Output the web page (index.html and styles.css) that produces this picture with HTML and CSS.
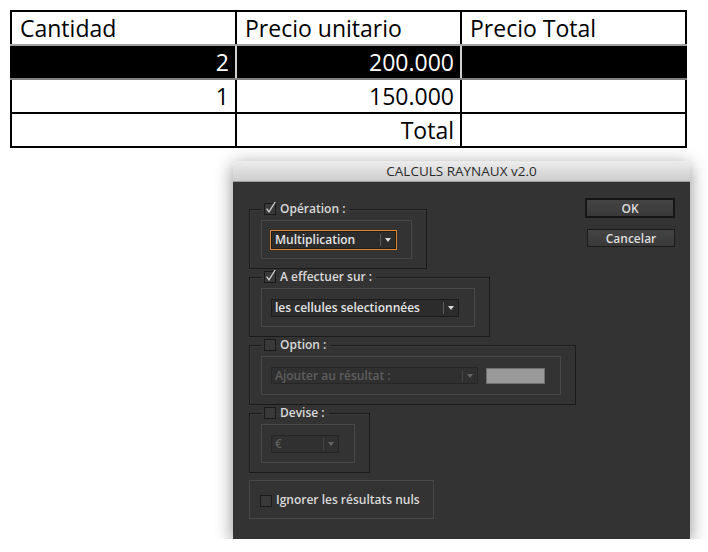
FILE: index.html
```html
<!DOCTYPE html>
<html lang="es">
<head>
    <meta charset="UTF-8">
    <title>Calculs Raynaux</title>
    <link rel="stylesheet" href="styles.css">
</head>
<body>

<table class="grid">
    <thead>
        <tr><th>Cantidad</th><th>Precio unitario</th><th>Precio Total</th></tr>
    </thead>
    <tbody>
        <tr class="sel"><td class="num">2</td><td class="num">200.000</td><td></td></tr>
        <tr><td class="num">1</td><td class="num">150.000</td><td></td></tr>
        <tr><td></td><td class="num">Total</td><td></td></tr>
    </tbody>
</table>

<div class="dialog">
    <div class="titlebar">CALCULS RAYNAUX v2.0</div>
    <div class="dialog-body">
        <div class="panels">
            <fieldset class="panel">
                <legend><svg class="cb" width="13" height="14" viewBox="0 0 13 14"><rect x="0.5" y="2.5" width="11" height="11" fill="#393939" stroke="#1a1a1a"/><path d="M2.6 7.6 L5 10.8 L11.2 1" fill="none" stroke="#cfcfcf" stroke-width="1.4"/></svg>Opération :</legend>
                <div class="group">
                    <div class="dropdown focus dd-op">
                        <span class="value">Multiplication</span>
                        <span class="arrow"></span>
                    </div>
                </div>
            </fieldset>
            <fieldset class="panel">
                <legend><svg class="cb" width="13" height="14" viewBox="0 0 13 14"><rect x="0.5" y="2.5" width="11" height="11" fill="#393939" stroke="#1a1a1a"/><path d="M2.6 7.6 L5 10.8 L11.2 1" fill="none" stroke="#cfcfcf" stroke-width="1.4"/></svg>A effectuer sur :</legend>
                <div class="group">
                    <div class="dropdown dd-cells">
                        <span class="value">les cellules selectionnées</span>
                        <span class="arrow"></span>
                    </div>
                </div>
            </fieldset>
            <fieldset class="panel">
                <legend><svg class="cb" width="13" height="14" viewBox="0 0 13 14"><rect x="0.5" y="2.5" width="11" height="11" fill="#393939" stroke="#1a1a1a"/></svg>Option :</legend>
                <div class="group">
                    <div class="dropdown disabled dd-add">
                        <span class="value">Ajouter au résultat :</span>
                        <span class="arrow"></span>
                    </div>
                    <div class="swatch"></div>
                </div>
            </fieldset>
            <fieldset class="panel">
                <legend><svg class="cb" width="13" height="14" viewBox="0 0 13 14"><rect x="0.5" y="2.5" width="11" height="11" fill="#393939" stroke="#1a1a1a"/></svg>Devise :</legend>
                <div class="group">
                    <div class="dropdown disabled dd-cur">
                        <span class="value">€</span>
                        <span class="arrow"></span>
                    </div>
                </div>
            </fieldset>
            <div class="plain">
                <svg class="cb" width="13" height="14" viewBox="0 0 13 14"><rect x="0.5" y="2.5" width="11" height="11" fill="#393939" stroke="#1a1a1a"/></svg>Ignorer les résultats nuls
            </div>
        </div>
        <div class="buttons">
            <button class="btn default">OK</button>
            <button class="btn">Cancelar</button>
        </div>
    </div>
</div>

</body>
</html>
```

FILE: styles.css
```css
body {
    margin: 0;
    background: #fff;
    font-family: "Open Sans", "Liberation Sans", sans-serif;
}

/* spreadsheet-like table */
.grid {
    border-collapse: collapse;
    table-layout: fixed;
    width: 677px;
    margin: 10px 0 0 10px;
    font-size: 23px;
    color: #000;
}
.grid tr {
    height: 34px;
}
.grid th,
.grid td {
    border: 2px solid #000;
    padding: 0 6px 0 8px;
    line-height: 28px;
    font-weight: normal;
    text-align: left;
    white-space: nowrap;
}
.grid .num {
    text-align: right;
}
.grid thead th {
    border-bottom-color: #a0a0a0;
}
.sel td {
    background: #000;
    color: #fff;
    border-right-color: #d0d0d0;
    border-bottom-color: #808080;
}
.sel td:last-child {
    border-right-color: #000;
}

/* dialog */
.dialog {
    width: 457px;
    margin: 13px 0 0 233px;
    border-radius: 5px 5px 0 0;
    box-shadow: 0 4px 18px rgba(0, 0, 0, 0.45);
}
.titlebar {
    height: 21px;
    box-sizing: border-box;
    line-height: 20px;
    text-align: center;
    font-size: 13.5px;
    color: #2b2b2b;
    background: linear-gradient(#ededed, #cdcdcd);
    border-radius: 5px 5px 0 0;
    border-bottom: 1px solid #9c9c9c;
}
.dialog-body {
    height: 357px;
    box-sizing: border-box;
    display: flex;
    justify-content: space-between;
    padding: 16px 15px 20px 16px;
    background: #333;
    color: #d9d9d9;
    font-size: 12px;
    font-weight: 600;
}
.panels {
    display: flex;
    flex-direction: column;
    align-items: flex-start;
    padding-top: 3px;
}
.panel {
    margin: 0;
    padding: 0;
    min-width: 0;
    border: 1px solid #1b1b1b;
    box-shadow: inset 1px 1px 0 #3b3b3b;
}
.panel legend {
    margin-left: 12px;
    padding: 0 4px 0 2px;
    height: 16px;
    line-height: 16px;
    white-space: nowrap;
}
.cb {
    vertical-align: -2px;
    margin-right: 3px;
}
.group {
    display: flex;
    align-items: center;
    gap: 8px;
    height: 39px;
    box-sizing: border-box;
    margin: 3px 14px 9px 11px;
    padding: 0 15px 0 9px;
    border: 1px solid #474747;
}

.dropdown {
    display: flex;
    align-items: center;
    height: 18px;
    box-sizing: border-box;
    border: 1px solid #1c1c1c;
    background: #2c2c2c;
    color: #e4e4e4;
}
.dropdown .value {
    flex: 1;
    padding-left: 3px;
    line-height: 16px;
    white-space: nowrap;
    overflow: hidden;
}
.dropdown .arrow {
    width: 14px;
    height: 12px;
    border-left: 1px solid #5a5a5a;
    display: flex;
    align-items: center;
    justify-content: center;
}
.dropdown .arrow::after {
    content: "";
    border-left: 3.5px solid transparent;
    border-right: 3.5px solid transparent;
    border-top: 4px solid #dadada;
}
.dropdown.focus {
    outline: 1px solid #e5832b;
}
.dropdown.disabled {
    background: #303030;
    border-color: #262626;
    color: #5e5e5e;
}
.dropdown.disabled .arrow {
    border-left-color: #444;
}
.dropdown.disabled .arrow::after {
    border-top-color: #666;
}
.dd-op { width: 125px; }
.dd-cells { width: 188px; }
.dd-add { width: 207px; height: 17px; }
.dd-cur { width: 68px; }

.swatch {
    width: 59px;
    height: 16px;
    box-sizing: border-box;
    background: #999;
    border: 1px solid #6e6e6e;
}

.plain {
    display: flex;
    align-items: center;
    width: 185px;
    height: 39px;
    box-sizing: border-box;
    margin-top: 7px;
    padding-left: 10px;
    border: 1px solid #474747;
    white-space: nowrap;
}

.buttons {
    display: flex;
    flex-direction: column;
    align-items: flex-end;
    gap: 11px;
}
.btn {
    width: 88px;
    height: 18px;
    padding: 0;
    border: 1px solid #1a1a1a;
    background: linear-gradient(#444, #393939);
    color: #dcdcdc;
    font-family: inherit;
    font-size: 12px;
    font-weight: 600;
    line-height: 15px;
}
.btn.default {
    width: 90px;
    height: 20px;
    border: 2px solid #161616;
}
```
